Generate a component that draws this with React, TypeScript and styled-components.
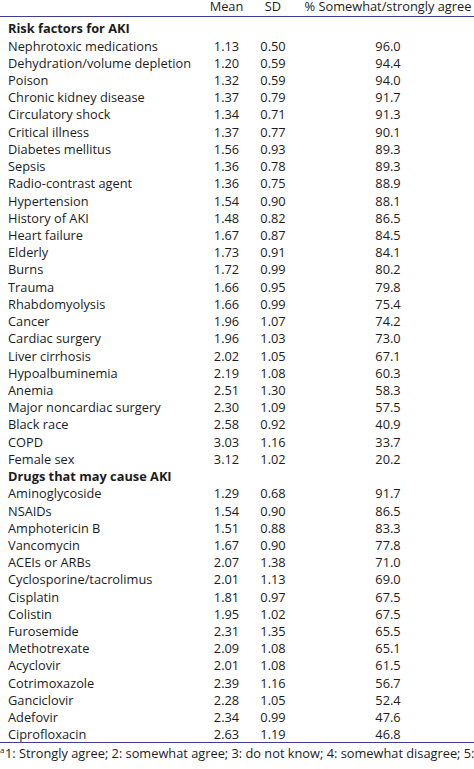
import styled, { createGlobalStyle } from 'styled-components'

const GlobalStyle = createGlobalStyle`
  html, body {
    margin: 0;
    padding: 0;
    background: #ffffff;
    overflow: hidden;
  }
  body {
    font-family: "Open Sans", "Liberation Sans", sans-serif;
    color: #1c1c1c;
  }
`

type Item = [string, string, string, string]

const riskFactors: Item[] = [
  ['Nephrotoxic medications', '1.13', '0.50', '96.0'],
  ['Dehydration/volume depletion', '1.20', '0.59', '94.4'],
  ['Poison', '1.32', '0.59', '94.0'],
  ['Chronic kidney disease', '1.37', '0.79', '91.7'],
  ['Circulatory shock', '1.34', '0.71', '91.3'],
  ['Critical illness', '1.37', '0.77', '90.1'],
  ['Diabetes mellitus', '1.56', '0.93', '89.3'],
  ['Sepsis', '1.36', '0.78', '89.3'],
  ['Radio-contrast agent', '1.36', '0.75', '88.9'],
  ['Hypertension', '1.54', '0.90', '88.1'],
  ['History of AKI', '1.48', '0.82', '86.5'],
  ['Heart failure', '1.67', '0.87', '84.5'],
  ['Elderly', '1.73', '0.91', '84.1'],
  ['Burns', '1.72', '0.99', '80.2'],
  ['Trauma', '1.66', '0.95', '79.8'],
  ['Rhabdomyolysis', '1.66', '0.99', '75.4'],
  ['Cancer', '1.96', '1.07', '74.2'],
  ['Cardiac surgery', '1.96', '1.03', '73.0'],
  ['Liver cirrhosis', '2.02', '1.05', '67.1'],
  ['Hypoalbuminemia', '2.19', '1.08', '60.3'],
  ['Anemia', '2.51', '1.30', '58.3'],
  ['Major noncardiac surgery', '2.30', '1.09', '57.5'],
  ['Black race', '2.58', '0.92', '40.9'],
  ['COPD', '3.03', '1.16', '33.7'],
  ['Female sex', '3.12', '1.02', '20.2'],
]

const drugs: Item[] = [
  ['Aminoglycoside', '1.29', '0.68', '91.7'],
  ['NSAIDs', '1.54', '0.90', '86.5'],
  ['Amphotericin B', '1.51', '0.88', '83.3'],
  ['Vancomycin', '1.67', '0.90', '77.8'],
  ['ACEIs or ARBs', '2.07', '1.38', '71.0'],
  ['Cyclosporine/tacrolimus', '2.01', '1.13', '69.0'],
  ['Cisplatin', '1.81', '0.97', '67.5'],
  ['Colistin', '1.95', '1.02', '67.5'],
  ['Furosemide', '2.31', '1.35', '65.5'],
  ['Methotrexate', '2.09', '1.08', '65.1'],
  ['Acyclovir', '2.01', '1.08', '61.5'],
  ['Cotrimoxazole', '2.39', '1.16', '56.7'],
  ['Ganciclovir', '2.28', '1.05', '52.4'],
  ['Adefovir', '2.34', '0.99', '47.6'],
  ['Ciprofloxacin', '2.63', '1.19', '46.8'],
]

const Section = ({ title, items }: { title: string; items: Item[] }) => (
  <>
    <Row>
      <NameCell bold>{title}</NameCell>
    </Row>
    {items.map((item, index) => (
      <Row key={index}>
        <NameCell>{item[0]}</NameCell>
        <NumCell>{item[1]}</NumCell>
        <NumCell>{item[2]}</NumCell>
        <NumCell>{item[3]}</NumCell>
      </Row>
    ))}
  </>
)

const App = () => {
  return (
    <Page>
      <GlobalStyle />
      <Table>
        <HeaderRow>
          <NameCell />
          <NumCell>Mean</NumCell>
          <NumCell>SD</NumCell>
          <NumCell>% Somewhat/strongly agree</NumCell>
        </HeaderRow>
        <Rule />
        <Body>
          <Section title="Risk factors for AKI" items={riskFactors} />
          <Section title="Drugs that may cause AKI" items={drugs} />
        </Body>
        <Rule bottom />
      </Table>
      <Footnote>
        <sup>a</sup>1: Strongly agree; 2: somewhat agree; 3: do not know; 4: somewhat disagree; 5: strongly disagree.
      </Footnote>
    </Page>
  )
}

export default App

const Page = styled.div`
  width: 474px;
  height: 769px;
  overflow: hidden;
  font-size: 12.8px;
`

const Table = styled.div`
  width: 478px;
`

const columns = '205px 43px 50px 180px'

const HeaderRow = styled.div`
  display: grid;
  grid-template-columns: ${columns};
  line-height: 12px;
  padding-bottom: 3.5px;
`

const Body = styled.div`
  padding-top: 3.9px;
`

const Row = styled.div`
  display: grid;
  grid-template-columns: ${columns};
  line-height: 17.22px;
  height: 17.22px;
`

const NameCell = styled.div<{ bold?: boolean }>`
  padding-left: 8px;
  white-space: nowrap;
  font-weight: ${(p) => (p.bold ? 700 : 400)};
`

const NumCell = styled.div`
  text-align: center;
  white-space: nowrap;
`

const Rule = styled.div<{ bottom?: boolean }>`
  height: 1px;
  background: #3c3f8e;
  margin-top: ${(p) => (p.bottom ? '-2px' : '0')};
`

const Footnote = styled.div`
  white-space: nowrap;
  line-height: 17px;
  margin-top: 2px;

  sup {
    font-size: 8px;
    line-height: 0;
    vertical-align: 5px;
    margin-right: 0.5px;
  }
`
